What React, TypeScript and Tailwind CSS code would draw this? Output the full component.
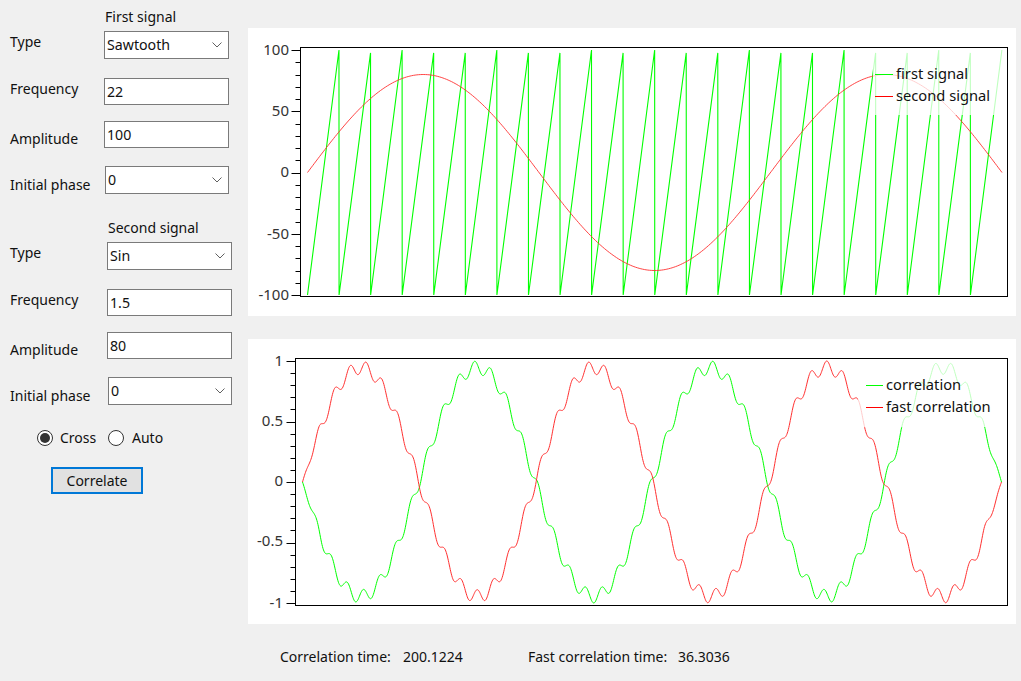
import React from "react";

const font = { fontFamily: '"Noto Sans", sans-serif' };

function Chevron() {
  return (
    <svg width="10" height="6" viewBox="0 0 10 6" fill="none">
      <path d="M0.5 0.5 L5 5 L9.5 0.5" stroke="#606060" strokeWidth="1" />
    </svg>
  );
}

function Select({ value, width }: { value: string; width: string }) {
  return (
    <div className={`flex h-[28px] items-center justify-between border border-[#7a7a7a] bg-white pl-[2px] pr-[6px] ${width}`}>
      <span className="pb-[1px] text-[14.2px]">{value}</span>
      <Chevron />
    </div>
  );
}

function Field({ value }: { value: string }) {
  return (
    <div className="flex h-[27px] w-[125px] items-center border border-[#7a7a7a] bg-white pl-[2px]">
      <span className="text-[14.2px]">{value}</span>
    </div>
  );
}

function Row({
  label,
  labelWidth,
  labelShift,
  rowClass,
  children,
}: {
  label: string;
  labelWidth: string;
  labelShift: string;
  rowClass: string;
  children: React.ReactNode;
}) {
  return (
    <div className={`flex items-center ${rowClass}`}>
      <div className={`shrink-0 pl-[10px] ${labelWidth} ${labelShift}`}>{label}</div>
      {children}
    </div>
  );
}

function SignalGroup({
  title,
  type,
  frequency,
  amplitude,
  titleClass,
  labelWidth,
  phaseLabelWidth,
}: {
  title: string;
  type: string;
  frequency: string;
  amplitude: string;
  titleClass: string;
  labelWidth: string;
  phaseLabelWidth: string;
}) {
  return (
    <div className="flex flex-col">
      <div className={`h-[18px] leading-[18px] ${titleClass}`}>{title}</div>
      <Row label="Type" labelWidth={labelWidth} labelShift="pb-[6px]" rowClass="mt-[5px] h-[28px]">
        <Select value={type} width="w-[125px]" />
      </Row>
      <Row label="Frequency" labelWidth={labelWidth} labelShift="pb-[5px]" rowClass="mt-[19px] h-[27px]">
        <Field value={frequency} />
      </Row>
      <Row label="Amplitude" labelWidth={labelWidth} labelShift="pt-[9px]" rowClass="mt-[16px] h-[27px]">
        <Field value={amplitude} />
      </Row>
      <Row label="Initial phase" labelWidth={phaseLabelWidth} labelShift="pt-[10px]" rowClass="mt-[18px] h-[28px]">
        <Select value="0" width="w-[124px]" />
      </Row>
    </div>
  );
}

function Radio({ checked }: { checked?: boolean }) {
  return (
    <span className="flex h-[16px] w-[16px] shrink-0 items-center justify-center rounded-full border border-[#333333] bg-white">
      {checked ? <span className="h-[10px] w-[10px] rounded-full bg-[#333333]" /> : null}
    </span>
  );
}

const W = 768;

function ticks(top: number, bottom: number, n: number, major: number) {
  const out: React.ReactNode[] = [];
  for (let i = 0; i <= n; i++) {
    const y = Math.round(top + ((bottom - top) * i) / n) + 0.5;
    const len = i % major === 0 ? 9 : 5;
    out.push(<line key={i} x1={9 - len} x2={9} y1={y} y2={y} stroke="#000" strokeWidth="1" />);
  }
  return out;
}

function path(pts: [number, number][]) {
  return pts.map((p, i) => (i ? "L" : "M") + p[0].toFixed(2) + " " + p[1].toFixed(2)).join(" ");
}

const peakDeficit = [0, 1, 0, 1, 1, 0, 1, 1, 0, 1, 0, 1, 1, 0, 1, 1, 0, 1, 1, 0, 1, 0];

function sawPath() {
  const x0 = 59.5;
  const per = 694.5 / 22;
  const Y = (v: number) => 22 + ((100 - v) * 245) / 200;
  const pts: [number, number][] = [];
  for (let k = 0; k < 22; k++) {
    pts.push([x0 + k * per, Y(-100)]);
    pts.push([x0 + (k + 1) * per - 0.1, Y(100 - peakDeficit[k] * 2.4)]);
  }
  return path(pts);
}

function sinPath() {
  const pts: [number, number][] = [];
  for (let i = 0; i <= 400; i++) {
    const t = i / 400;
    pts.push([59.5 + 694.5 * t, 22 + ((100 - 80 * Math.sin(2 * Math.PI * 1.5 * t)) * 245) / 200]);
  }
  return path(pts);
}

function corrPath(sign: number, phase: number) {
  const pts: [number, number][] = [];
  for (let i = 0; i <= 1400; i++) {
    const t = i / 1400;
    const w = Math.min(1, t * 40, (1 - t) * 40);
    const r = 0.055 * w * Math.cos(2 * Math.PI * 44 * (t - 1 / 6) + phase);
    const v = sign * 0.945 * Math.sin(6 * Math.PI * t) + r;
    pts.push([54.5 + 699 * t, 22 + ((1 - v) * 242) / 2]);
  }
  return path(pts);
}

const sawD = sawPath();
const sinD = sinPath();
const greenD = corrPath(-1, Math.PI);
const redD = corrPath(1, (2 * Math.PI) / 3);

function Legend({ items, boxClass, lineWidth }: { items: [string, string][]; boxClass: string; lineWidth: string }) {
  return (
    <div className={`absolute flex flex-col bg-white/75 text-[14.7px] text-[#111111] ${boxClass}`}>
      {items.map(([color, text]) => (
        <div key={text} className="flex h-[22px] items-center gap-[3px]">
          <span className={`mt-[1px] h-px ${lineWidth}`} style={{ backgroundColor: color }} />
          <span className="pb-[2px]">{text}</span>
        </div>
      ))}
    </div>
  );
}

function TopChart() {
  const labels: [string, number][] = [["100", 50], ["50", 111], ["0", 172], ["-50", 234], ["-100", 295]];
  return (
    <div className="relative h-[288px] bg-white">
      <svg width={W} height={288} className="block">
        <rect x={52.5} y={19.5} width={707} height={249} fill="none" stroke="#000" />
        <g transform="translate(43.5,0)">{ticks(22, 267, 20, 5)}</g>
        <path d={sawD} fill="none" stroke="#00ff00" strokeWidth="1.1" />
        <path d={sinD} fill="none" stroke="#ff3030" strokeWidth="0.9" />
        {labels.map(([t, y]) => (
          <text key={t} x={41} y={y - 28 + 5} textAnchor="end" fontSize="15" fill="#333333" style={font}>
            {t}
          </text>
        ))}
      </svg>
      <Legend
        boxClass="right-[9px] top-[20px] h-[67px] w-[134px] pl-[2px] pt-[15px]"
        lineWidth="w-[18px]"
        items={[["#00ff00", "first signal"], ["#ff0000", "second signal"]]}
      />
    </div>
  );
}

function BottomChart() {
  const labels: [string, number][] = [["1", 361], ["0.5", 421], ["0", 481], ["-0.5", 541], ["-1", 603]];
  return (
    <div className="relative h-[285px] bg-white">
      <svg width={W} height={285} className="block">
        <rect x={47.5} y={19.5} width={712} height={247} fill="none" stroke="#000" />
        <g transform="translate(38.5,0)">{ticks(22, 264, 20, 5)}</g>
        <path d={greenD} fill="none" stroke="#00ff00" strokeWidth="1" />
        <path d={redD} fill="none" stroke="#ff3030" strokeWidth="1" />
        {labels.map(([t, y]) => (
          <text key={t} x={35} y={y - 339 + 5} textAnchor="end" fontSize="15" fill="#333333" style={font}>
            {t}
          </text>
        ))}
      </svg>
      <Legend
        boxClass="right-[9px] top-[20px] h-[68px] w-[149px] pl-[8px] pt-[15px]"
        lineWidth="w-[17px]"
        items={[["#00ff00", "correlation"], ["#ff0000", "fast correlation"]]}
      />
    </div>
  );
}

export default function App() {
  return (
    <div className="flex h-[681px] w-[1021px] overflow-hidden bg-[#f0f0f0] text-[14px] leading-[20px] text-[#111111]" style={font}>
      <div className="flex w-[248px] shrink-0 flex-col pt-[8px]">
        <SignalGroup
          title="First signal"
          titleClass="pl-[105px]"
          type="Sawtooth"
          frequency="22"
          amplitude="100"
          labelWidth="w-[104px]"
          phaseLabelWidth="w-[105px]"
        />
        <div className="mt-[25px]">
          <SignalGroup
            title="Second signal"
            titleClass="pl-[108px]"
            type="Sin"
            frequency="1.5"
            amplitude="80"
            labelWidth="w-[107px]"
            phaseLabelWidth="w-[108px]"
          />
        </div>
        <div className="mt-[23px] flex h-[20px] items-center pl-[37px]">
          <Radio checked />
          <span className="ml-[7px] w-[48px]">Cross</span>
          <Radio />
          <span className="ml-[8px]">Auto</span>
        </div>
        <div className="ml-[51px] mt-[19px] flex h-[27px] w-[92px] items-center justify-center border-2 border-[#0078d7] bg-[#e1e1e1]">
          Correlate
        </div>
      </div>
      <div className="flex w-[768px] shrink-0 flex-col pt-[28px]">
        <TopChart />
        <div className="mt-[23px]">
          <BottomChart />
        </div>
        <div className="mt-[23px] flex h-[20px] items-center pl-[32px]">
          <span className="w-[123px]">Correlation time:</span>
          <span className="w-[125px]">200.1224</span>
          <span className="w-[150px]">Fast correlation time:</span>
          <span>36.3036</span>
        </div>
      </div>
    </div>
  );
}
